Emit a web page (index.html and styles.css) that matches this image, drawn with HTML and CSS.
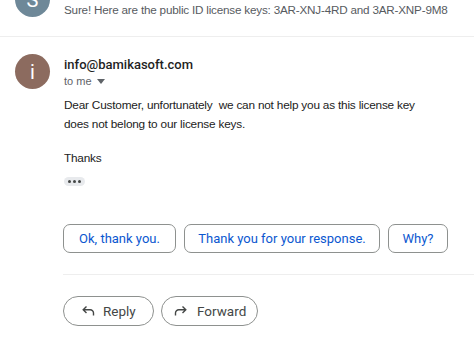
FILE: index.html
```html
<!DOCTYPE html>
<html>
<head>
<meta charset="utf-8">
<link rel="stylesheet" href="styles.css">
</head>
<body>
<div class="thread">
  <div class="collapsed">
    <div class="avatar avatar-s">S</div>
    <div class="snippet">Sure! Here are the public ID license keys: 3AR-XNJ-4RD and 3AR-XNP-9M8</div>
  </div>
  <div class="msg">
    <div class="avatar avatar-i">i</div>
    <div class="content">
      <div class="sender">info@bamikasoft.com</div>
      <div class="tome">to me <svg class="caret" width="8" height="5" viewBox="0 0 8 5"><path d="M0 0h8L4 5z" fill="#5f6368"/></svg></div>
      <div class="body">
        <p>Dear Customer, unfortunately&nbsp; we can not help you as this license key<br>does not belong to our license keys.</p>
        <p>Thanks</p>
      </div>
      <div class="dots"><span></span><span></span><span></span></div>
    </div>
  </div>
  <div class="chips">
    <div class="chip chip-a">Ok, thank you.</div>
    <div class="chip chip-b">Thank you for your response.</div>
    <div class="chip chip-c">Why?</div>
  </div>
  <div class="sep"></div>
  <div class="actions">
    <div class="action action-reply">
      <svg width="13" height="12" viewBox="0 0 13 12"><path d="M4.5 1.5L1.2 4.8L4.5 8.1M1.5 4.8H8.2a3.3 3.3 0 0 1 3.3 3.3V10.5" fill="none" stroke="#444746" stroke-width="1.4"/></svg>
      <span>Reply</span>
    </div>
    <div class="action action-fwd">
      <svg width="13" height="12" viewBox="0 0 13 12"><path d="M8.5 1.5L11.8 4.8L8.5 8.1M11.5 4.8H4.8a3.3 3.3 0 0 0 -3.3 3.3V10.5" fill="none" stroke="#444746" stroke-width="1.4"/></svg>
      <span>Forward</span>
    </div>
  </div>
</div>
</body>
</html>
```

FILE: styles.css
```css
html, body {
  margin: 0;
  padding: 0;
  background: #ffffff;
}
body {
  width: 474px;
  height: 354px;
  overflow: hidden;
  font-family: "Liberation Sans", Arial, sans-serif;
}
.thread {
  display: flex;
  flex-direction: column;
}
.collapsed {
  display: flex;
  align-items: flex-start;
  height: 36px;
  border-bottom: 1px solid #eeeeee;
}
.avatar {
  flex: none;
  width: 35px;
  height: 35px;
  border-radius: 50%;
  color: #ffffff;
  display: flex;
  align-items: center;
  justify-content: center;
  font-family: Roboto, "Liberation Sans", sans-serif;
  font-size: 20px;
  margin-left: 15px;
  margin-right: 14px;
}
.avatar-s {
  background: #6e8898;
  margin-top: -18px;
}
.avatar-i {
  background: #8c6b5f;
  margin-top: 17px;
}
.snippet {
  font-size: 11.7px;
  letter-spacing: -0.2px;
  color: #575b5f;
  margin-top: 3px;
  white-space: nowrap;
}
.msg {
  display: flex;
  align-items: flex-start;
}
.content {
  display: flex;
  flex-direction: column;
  padding-top: 19px;
}
.sender {
  font-family: Roboto, "Liberation Sans", sans-serif;
  font-weight: 500;
  font-size: 13px;
  color: #1f1f1f;
  line-height: 17px;
}
.tome {
  font-size: 11px;
  color: #5f6368;
  margin-top: 2px;
  display: flex;
  align-items: center;
  gap: 5px;
}
.caret {
  display: block;
}
.body {
  margin-top: 9px;
  font-size: 11.8px;
  letter-spacing: -0.2px;
  color: #222222;
  line-height: 19px;
}
.body p {
  margin: 0 0 15px 0;
}
.dots {
  width: 21px;
  height: 9px;
  border-radius: 5px;
  background: #e8eaed;
  display: flex;
  align-items: center;
  justify-content: center;
  gap: 2px;
  margin-top: -6px;
}
.dots span {
  width: 3px;
  height: 3px;
  border-radius: 50%;
  background: #444746;
}
.chips {
  display: flex;
  gap: 8px;
  margin-top: 38px;
  padding-left: 63px;
}
.chip {
  box-sizing: border-box;
  height: 29px;
  border: 1px solid #8e918f;
  border-radius: 7px;
  display: flex;
  align-items: center;
  justify-content: center;
  font-family: Roboto, "Open Sans", sans-serif;
  font-size: 13px;
  color: #0b57d0;
}
.chip-a { width: 113px; }
.chip-b { width: 196px; }
.chip-c { width: 60px; }
.sep {
  margin-top: 21px;
  margin-left: 63px;
  height: 1px;
  background: #eeeeee;
}
.actions {
  display: flex;
  gap: 7px;
  margin-top: 21px;
  padding-left: 63px;
}
.action {
  box-sizing: border-box;
  height: 30px;
  border: 1px solid #8e918f;
  border-radius: 15px;
  display: flex;
  align-items: center;
  font-family: Roboto, "Open Sans", sans-serif;
  font-size: 13.5px;
  color: #444746;
}
.action-reply {
  width: 91px;
  padding-left: 18px;
  gap: 8px;
}
.action-fwd {
  width: 97px;
  padding-left: 12px;
  gap: 10px;
}
```
